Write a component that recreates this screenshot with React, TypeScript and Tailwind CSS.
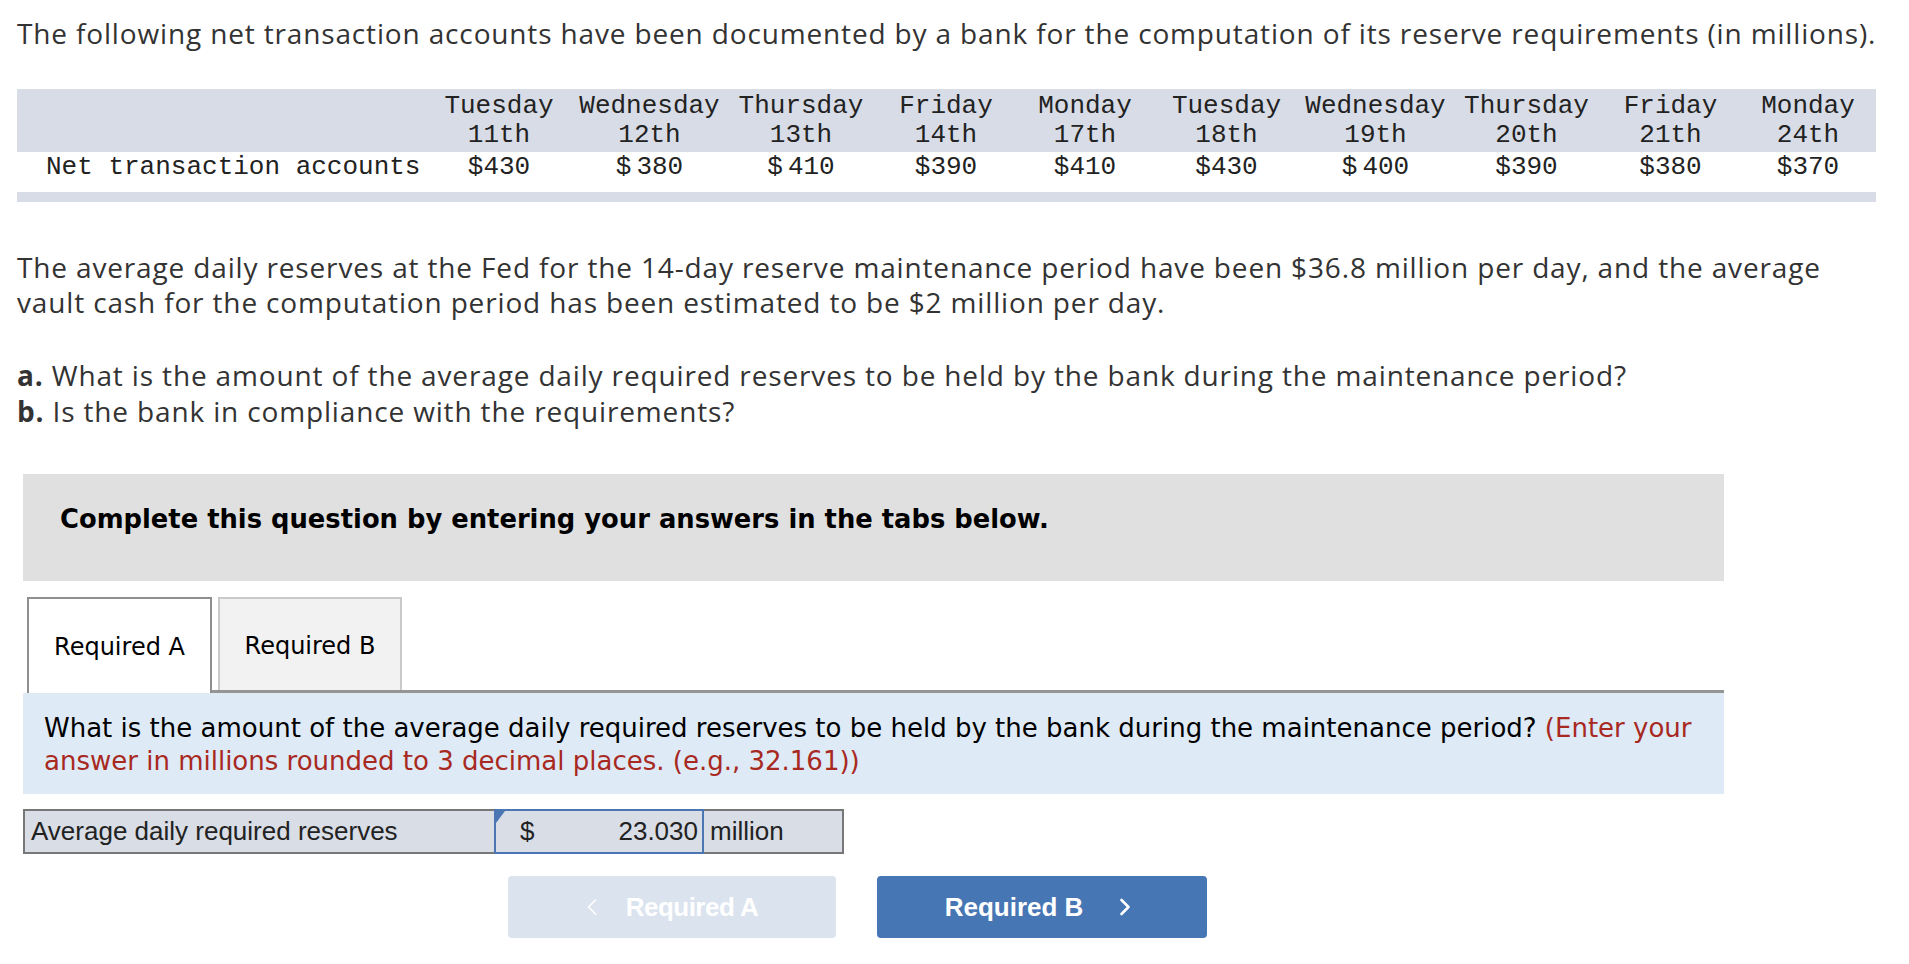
import { ChevronLeft, ChevronRight } from "lucide-react"

const days = [
  { day: "Tuesday", date: "11th", value: "430", gap: false },
  { day: "Wednesday", date: "12th", value: "380", gap: true },
  { day: "Thursday", date: "13th", value: "410", gap: true },
  { day: "Friday", date: "14th", value: "390", gap: false },
  { day: "Monday", date: "17th", value: "410", gap: false },
  { day: "Tuesday", date: "18th", value: "430", gap: false },
  { day: "Wednesday", date: "19th", value: "400", gap: true },
  { day: "Thursday", date: "20th", value: "390", gap: false },
  { day: "Friday", date: "21th", value: "380", gap: false },
  { day: "Monday", date: "24th", value: "370", gap: false },
]

const cols =
  "grid grid-cols-[408px_148px_153px_150px_140px_138px_145px_153px_149px_139px_136px]"

function AccountsTable() {
  return (
    <div className="mt-[38px] w-[1859px] font-['Liberation_Mono',monospace] text-[26px] leading-[29px] text-[#222]">
      <div className={`${cols} bg-[#d8dce6] pt-[3px] pb-[2px]`}>
        <div />
        {days.map((d, i) => (
          <div key={i} className="text-center">
            <div>{d.day}</div>
            <div>{d.date}</div>
          </div>
        ))}
      </div>
      <div className={`${cols} pt-[1px] pb-[10px]`}>
        <div className="pl-[29px]">Net transaction accounts</div>
        {days.map((d, i) => (
          <div key={i} className="text-center">
            ${d.gap ? <span className="ml-[5px]">{d.value}</span> : d.value}
          </div>
        ))}
      </div>
      <div className="h-[10px] bg-[#d8dce6]" />
    </div>
  )
}

function Tabs() {
  return (
    <div className="mt-[16px] flex pl-[4px]">
      <div className="flex h-[96px] w-[185px] items-start justify-center border-2 border-b-0 border-[#8f8f8f] bg-white pt-[30px] font-['DejaVu_Sans',sans-serif] text-[24px] text-black">
        Required A
      </div>
      <div className="flex flex-1 items-end border-b-[3px] border-[#959595]">
        <div className="ml-[6px] flex h-[93px] w-[184px] items-center justify-center border-2 border-b-0 border-[#c9c9c9] bg-[#f2f2f2] pt-[2px] font-['DejaVu_Sans',sans-serif] text-[24px] text-black">
          Required B
        </div>
      </div>
    </div>
  )
}

function AnswerRow() {
  return (
    <div className="mt-[15px] flex h-[45px] w-[821px] font-['Liberation_Sans',Arial,sans-serif] text-[26px] text-[#222]">
      <div className="flex w-[471px] items-center border-2 border-r-0 border-[#777] bg-[#d9dde6] pl-[6px]">
        Average daily required reserves
      </div>
      <div className="relative flex w-[210px] items-center justify-between border-2 border-[#4a76b4] bg-[#d9dde6] pl-[24px] pr-[4px]">
        <span className="absolute left-0 top-0 h-0 w-0 border-r-[9px] border-t-[12px] border-r-transparent border-t-[#4a76b4]" />
        <span>$</span>
        <span>23.030</span>
      </div>
      <div className="flex w-[140px] items-center border-2 border-l-0 border-[#777] bg-[#d9dde6] pl-[6px]">
        million
      </div>
    </div>
  )
}

function NavButtons() {
  return (
    <div className="mt-[22px] flex gap-[41px] pl-[485px] font-['Liberation_Sans',Arial,sans-serif] text-[26px] font-bold text-white">
      <button className="flex h-[62px] w-[328px] items-center justify-center gap-[20px] rounded-[4px] bg-[#dae3ee] tracking-[-0.5px]">
        <ChevronLeft size={28} strokeWidth={1.5} className="-ml-[8px]" />
        Required A
      </button>
      <button className="flex h-[62px] w-[330px] items-center justify-center gap-[28px] rounded-[4px] bg-[#4676b3]">
        Required B
        <ChevronRight size={28} strokeWidth={2.25} />
      </button>
    </div>
  )
}

export default function App() {
  return (
    <div className="min-h-screen w-[1909px] bg-white pl-[17px] pt-[15px] font-['Open_Sans',sans-serif] text-[#333]">
      <p className="text-[28px] leading-[36px] tracking-[0.85px]">
        The following net transaction accounts have been documented by a bank for the computation of its reserve requirements (in millions).
      </p>

      <AccountsTable />

      <p className="mt-[48px] w-[1865px] text-[28px] leading-[35px] tracking-[0.85px]">
        The average daily reserves at the Fed for the 14-day reserve maintenance period have been $36.8 million per day, and the average vault cash for the computation period has been estimated to be $2 million per day.
      </p>

      <p className="mt-[37px] text-[28px] leading-[36px] tracking-[0.85px]">
        <b className="font-bold">a.</b> What is the amount of the average daily required reserves to be held by the bank during the maintenance period?
        <br />
        <b className="font-bold">b.</b> Is the bank in compliance with the requirements?
      </p>

      <div className="ml-[6px] mt-[45px] w-[1701px]">
        <div className="h-[107px] bg-[#e0e0e0] pl-[37px] pt-[30px] font-['DejaVu_Sans',sans-serif] text-[25.8px] font-bold leading-[30px] text-black">
          Complete this question by entering your answers in the tabs below.
        </div>

        <Tabs />

        <div className="bg-[#deeaf6] pb-[16px] pl-[21px] pr-[20px] pt-[19px] font-['DejaVu_Sans',sans-serif] text-[26px] leading-[33px] text-black">
          What is the amount of the average daily required reserves to be held by the bank during the maintenance period?{" "}
          <span className="text-[#a8291f]">
            (Enter your answer in millions rounded to 3 decimal places. (e.g., 32.161))
          </span>
        </div>

        <AnswerRow />
        <NavButtons />
      </div>
    </div>
  )
}
